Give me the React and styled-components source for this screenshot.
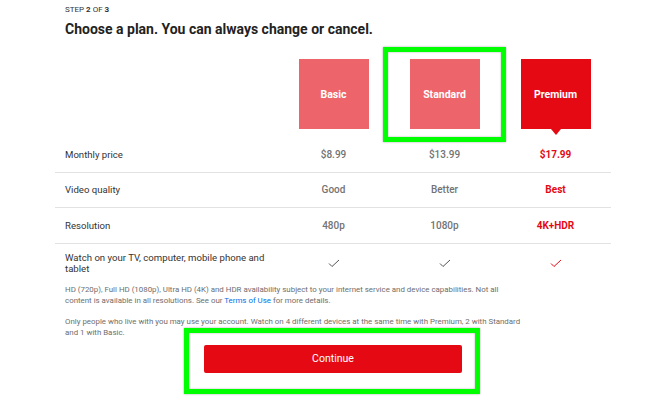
import React from "react";
import styled, { createGlobalStyle } from "styled-components";

const Global = createGlobalStyle`
  html, body { margin: 0; padding: 0; background: #fff; }
  body { font-family: Roboto, "Liberation Sans", Arial, sans-serif; color: #333; }
  * { box-sizing: border-box; }
`;

const Page = styled.div`
  width: 650px;
  height: 408px;
  position: relative;
  overflow: hidden;
  padding-left: 55px;
`;

const Container = styled.div`
  width: 556px;
`;

const Header = styled.div`
  padding: 5px 0 0 10px;
`;

const Step = styled.div`
  font-size: 8px;
  line-height: 10px;
  text-transform: uppercase;
  color: #333;
  b { font-weight: 700; }
`;

const Title = styled.h1`
  margin: 4px 0 0;
  font-size: 14px;
  line-height: 20px;
  font-weight: 700;
  color: #222;
`;

const Grid = styled.div`
  display: grid;
  grid-template-columns: 223px 111px 111px 111px;
  align-items: center;
`;

const PlanRow = styled(Grid)`
  margin-top: 20px;
  height: 78px;
  align-items: start;
`;

const PlanCell = styled.div`
  display: flex;
  justify-content: center;
`;

const PlanBox = styled.div`
  position: relative;
  width: 70px;
  height: 70px;
  display: flex;
  align-items: center;
  justify-content: center;
  background: ${(p) => (p.$active ? "#e50914" : "#ee646b")};
  color: #fff;
  font-size: 10.5px;
  font-weight: 700;
  &::after {
    content: "";
    display: ${(p) => (p.$active ? "block" : "none")};
    position: absolute;
    left: 50%;
    bottom: -6px;
    margin-left: -5px;
    border-left: 5px solid transparent;
    border-right: 5px solid transparent;
    border-top: 6px solid #e50914;
  }
`;

const Highlight = styled.div`
  position: absolute;
  left: ${(p) => p.$l}px;
  top: ${(p) => p.$t}px;
  width: ${(p) => p.$w}px;
  height: ${(p) => p.$h}px;
  border: 5px solid #00ff00;
  box-shadow: 0 0 2px rgba(0, 0, 0, 0.35), inset 0 0 2px rgba(0, 0, 0, 0.35);
  pointer-events: none;
`;

const Row = styled(Grid)`
  min-height: 35.5px;
  border-bottom: ${(p) => (p.$last ? "none" : "1px solid #e2e2e2")};
  padding: ${(p) => (p.$last ? "8px 0 9px" : "0")};
`;

const Label = styled.div`
  padding: 0 0 0 10px;
  font-size: 9.6px;
  line-height: 11.5px;
  color: #333;
`;

const Value = styled.div`
  display: flex;
  justify-content: center;
  font-size: 10px;
  color: ${(p) => (p.$active ? "#e50914" : "#737373")};
  font-weight: ${(p) => (p.$active ? 700 : 500)};
`;

const Notes = styled.div`
  padding: 0 10px;
  width: 520px;
`;

const Note = styled.p`
  margin: 0 0 10px;
  font-size: 7.9px;
  line-height: 11px;
  color: #6e6e6e;
  &:last-child { margin-bottom: 0; }
  a { color: #0071eb; text-decoration: none; }
`;

const ButtonWrap = styled.div`
  position: relative;
  display: flex;
  justify-content: center;
  margin-top: 7px;
`;

const Button = styled.button`
  width: 258px;
  height: 28px;
  border: none;
  border-radius: 2px;
  background: #e50914;
  color: #fff;
  font-family: inherit;
  font-size: 10.5px;
  font-weight: 400;
`;

const Check = ({ red }) => (
  <svg width="12" height="9" viewBox="0 0 12 9">
    <path d="M1 4.5 L4 7.5 L11 1" fill="none" stroke={red ? "#e50914" : "#555"} strokeWidth="1" />
  </svg>
);

const plans = ["Basic", "Standard", "Premium"];
const rows = [
  { label: "Monthly price", values: ["$8.99", "$13.99", "$17.99"] },
  { label: "Video quality", values: ["Good", "Better", "Best"] },
  { label: "Resolution", values: ["480p", "1080p", "4K+HDR"] },
];

export default function App() {
  return (
    <>
      <Global />
      <Page>
        <Container>
          <Header>
            <Step>Step <b>2</b> of <b>3</b></Step>
            <Title>Choose a plan. You can always change or cancel.</Title>
          </Header>
          <PlanRow>
            <div />
            {plans.map((p, i) => (
              <PlanCell key={p}>
                <PlanBox $active={i === 2}>
                  {p}
                  {i === 1 && <Highlight $l={-27} $t={-12} $w={123} $h={95} />}
                </PlanBox>
              </PlanCell>
            ))}
          </PlanRow>
          {rows.map((r) => (
            <Row key={r.label}>
              <Label>{r.label}</Label>
              {r.values.map((v, i) => (
                <Value key={v} $active={i === 2}>{v}</Value>
              ))}
            </Row>
          ))}
          <Row $last>
            <Label>Watch on your TV, computer, mobile phone and tablet</Label>
            <Value><Check /></Value>
            <Value><Check /></Value>
            <Value $active><Check red /></Value>
          </Row>
          <Notes>
            <Note>
              HD (720p), Full HD (1080p), Ultra HD (4K) and HDR availability subject to your internet service and device capabilities. Not all<br />
              content is available in all resolutions. See our <a href="#">Terms of Use</a> for more details.
            </Note>
            <Note>
              Only people who live with you may use your account. Watch on 4 different devices at the same time with Premium, 2 with Standard<br />
              and 1 with Basic.
            </Note>
          </Notes>
          <ButtonWrap>
            <Button>Continue</Button>
            <Highlight $l={129} $t={-17} $w={296} $h={66} />
          </ButtonWrap>
        </Container>
      </Page>
    </>
  );
}
